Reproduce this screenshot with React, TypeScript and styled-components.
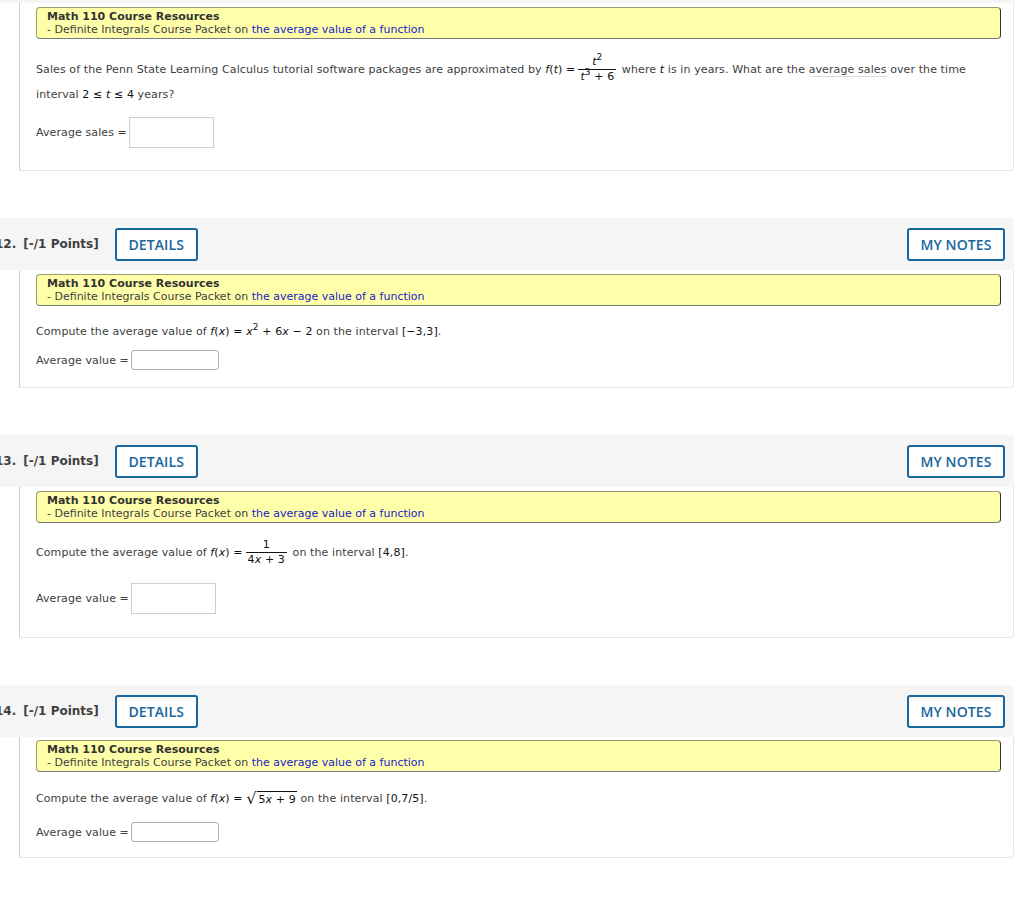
import React from 'react';
import styled, { createGlobalStyle } from 'styled-components';

const colors = {
  text: '#404040',
  math: '#111',
  band: '#f5f5f5',
  blue: '#19669d',
  link: '#2222c8',
  yellow: '#ffffaa',
};

const GlobalStyle = createGlobalStyle`
  html, body {
    margin: 0;
    padding: 0;
    background: #fff;
    overflow: hidden;
  }
  body {
    font-family: 'DejaVu Sans', Verdana, sans-serif;
    color: ${colors.text};
  }
`;

const Page = styled.div`
  width: 1026px;
  margin-left: -12px;
  margin-top: -49px;
`;

const Question = styled.section`
  margin-bottom: 47px;
`;

const Header = styled.div`
  height: 52px;
  display: flex;
  align-items: center;
  padding: 0 9px 0 7px;
  background: ${colors.band};
  border-top-right-radius: 4px;
`;

const Number = styled.span`
  font-size: 12px;
  font-weight: bold;
  margin-right: 7px;
`;

const Points = styled.span`
  font-size: 12px;
  font-weight: bold;
`;

const OutlineButton = styled.button<{ $width: number; $push?: boolean }>`
  width: ${p => p.$width}px;
  height: 33px;
  margin-left: ${p => (p.$push ? 'auto' : '16px')};
  border: 2px solid ${colors.blue};
  border-radius: 3px;
  background: #fff;
  color: ${colors.blue};
  font-family: 'Open Sans', sans-serif;
  font-size: 14px;
  font-weight: 600;
  letter-spacing: 0.1px;
  cursor: pointer;
`;

const Body = styled.div<{ $bottom: number; $top?: number }>`
  margin-left: 31px;
  border-left: 1px solid #d0d0d0;
  border-right: 1px solid #e6e6e6;
  border-bottom: 1px solid #e6e6e6;
  border-bottom-right-radius: 4px;
  padding: ${p => p.$top ?? 4}px 12px ${p => p.$bottom}px 16px;
  font-size: 11px;
  letter-spacing: 0.1px;
`;

const Resources = styled.div`
  background: ${colors.yellow};
  border: 1px solid #9a9a6a;
  border-right-color: #333;
  border-bottom-color: #777;
  border-radius: 4px;
  padding: 2px 10px 2px 10px;
  line-height: 13px;
  letter-spacing: 0;
`;

const ResourceTitle = styled.div`
  font-weight: bold;
  color: #333;
`;

const ResourceLink = styled.a`
  color: ${colors.link};
  text-decoration: none;
`;

const Prompt = styled.p<{ $top: number }>`
  margin: ${p => p.$top}px 0 0;
  line-height: 23px;
`;

const Var = styled.i`
  color: ${colors.math};
`;

const Math = styled.span`
  color: ${colors.math};
`;

const Sup = styled.sup`
  font-size: 9px;
  line-height: 0;
`;

const Hint = styled.span`
  border-bottom: 1px solid #dcdcdc;
`;

const Frac = styled.span`
  display: inline-flex;
  flex-direction: column;
  align-items: center;
  vertical-align: middle;
  color: ${colors.math};
  line-height: 12px;
  margin: 0 2px 0 3px;
`;

const Numer = styled.span`
  padding: 0 2px 1px;
  border-bottom: 1px solid ${colors.math};
  align-self: stretch;
  text-align: center;
`;

const Denom = styled.span`
  padding: 1px 2px 0;
`;

const Root = styled.span`
  display: inline-flex;
  align-items: flex-end;
  color: ${colors.math};
  vertical-align: -2px;
`;

const RootSign = styled.span`
  font-size: 16px;
  line-height: 15px;
`;

const Radicand = styled.span`
  border-top: 1px solid ${colors.math};
  padding: 1px 1px 0 2px;
  line-height: 13px;
`;

const AnswerRow = styled.div<{ $top: number }>`
  margin-top: ${p => p.$top}px;
  display: flex;
  align-items: center;
  gap: 2px;
`;

const AnswerBox = styled.input<{ $big?: boolean }>`
  box-sizing: border-box;
  width: ${p => (p.$big ? 85 : 88)}px;
  height: ${p => (p.$big ? 31 : 20)}px;
  border: 1px solid ${p => (p.$big ? '#cfcfcf' : '#b0b0b0')};
  border-radius: ${p => (p.$big ? 0 : 3)}px;
  background: #fff;
  padding: 0 4px;
`;

function CourseResources() {
  return (
    <Resources>
      <ResourceTitle>Math 110 Course Resources</ResourceTitle>
      <div>
        - Definite Integrals Course Packet on{' '}
        <ResourceLink href="#">the average value of a function</ResourceLink>
      </div>
    </Resources>
  );
}

function QuestionHeader({ num }: { num: number }) {
  return (
    <Header>
      <Number>{num}.</Number>
      <Points>[-/1 Points]</Points>
      <OutlineButton $width={83}>DETAILS</OutlineButton>
      <OutlineButton $width={98} $push>
        MY NOTES
      </OutlineButton>
    </Header>
  );
}

function App(): JSX.Element {
  return (
    <>
      <GlobalStyle />
      <Page>
        <Question>
          <QuestionHeader num={11} />
          <Body $bottom={22}>
            <CourseResources />
            <Prompt $top={17}>
              Sales of the Penn State Learning Calculus tutorial software packages are approximated by{' '}
              <Var>f</Var>
              <Math>(</Math>
              <Var>t</Var>
              <Math>) =</Math>
              <Frac>
                <Numer>
                  <Var>t</Var>
                  <Sup>2</Sup>
                </Numer>
                <Denom>
                  <Var>t</Var>
                  <Sup>3</Sup> + 6
                </Denom>
              </Frac>{' '}
              where <Var>t</Var> is in years. What are the <Hint>average sales</Hint> over the time interval{' '}
              <Math>
                2 ≤ <Var>t</Var> ≤ 4
              </Math>{' '}
              years?
            </Prompt>
            <AnswerRow $top={11}>
              Average sales =
              <AnswerBox $big />
            </AnswerRow>
          </Body>
        </Question>

        <Question>
          <QuestionHeader num={12} />
          <Body $bottom={17}>
            <CourseResources />
            <Prompt $top={14}>
              Compute the average value of <Var>f</Var>
              <Math>(</Math>
              <Var>x</Var>
              <Math>
                ) = <Var>x</Var>
                <Sup>2</Sup> + 6<Var>x</Var> − 2
              </Math>{' '}
              on the interval <Math>[−3,3]</Math>.
            </Prompt>
            <AnswerRow $top={7}>
              Average value =
              <AnswerBox />
            </AnswerRow>
          </Body>
        </Question>

        <Question>
          <QuestionHeader num={13} />
          <Body $bottom={23}>
            <CourseResources />
            <Prompt $top={16}>
              Compute the average value of <Var>f</Var>
              <Math>(</Math>
              <Var>x</Var>
              <Math>) =</Math>
              <Frac>
                <Numer>1</Numer>
                <Denom>
                  4<Var>x</Var> + 3
                </Denom>
              </Frac>{' '}
              on the interval <Math>[4,8]</Math>.
            </Prompt>
            <AnswerRow $top={17}>
              Average value =
              <AnswerBox $big />
            </AnswerRow>
          </Body>
        </Question>

        <Question>
          <QuestionHeader num={14} />
          <Body $top={3} $bottom={15}>
            <CourseResources />
            <Prompt $top={15}>
              Compute the average value of <Var>f</Var>
              <Math>(</Math>
              <Var>x</Var>
              <Math>) = </Math>
              <Root>
                <RootSign>√</RootSign>
                <Radicand>
                  5<Var>x</Var> + 9
                </Radicand>
              </Root>{' '}
              on the interval <Math>[0,7/5]</Math>.
            </Prompt>
            <AnswerRow $top={12}>
              Average value =
              <AnswerBox />
            </AnswerRow>
          </Body>
        </Question>
      </Page>
    </>
  );
}

export default App;
